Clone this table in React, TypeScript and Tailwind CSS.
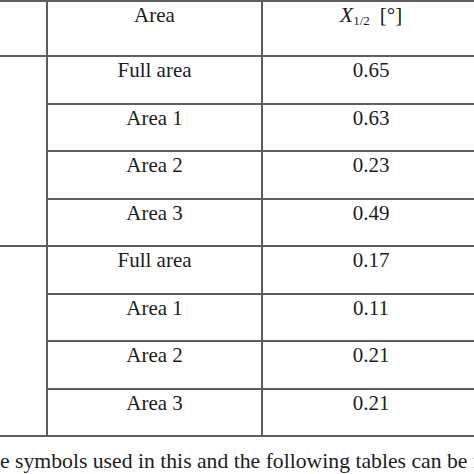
const groups = [
  [
    { area: "Full area", value: "0.65" },
    { area: "Area 1", value: "0.63" },
    { area: "Area 2", value: "0.23" },
    { area: "Area 3", value: "0.49" },
  ],
  [
    { area: "Full area", value: "0.17" },
    { area: "Area 1", value: "0.11" },
    { area: "Area 2", value: "0.21" },
    { area: "Area 3", value: "0.21" },
  ],
];

const App = () => {
  return (
    <div
      className="w-[474px] h-[474px] overflow-hidden bg-white text-[#1c1c1c]"
      style={{ fontFamily: '"Liberation Serif", "Times New Roman", serif' }}
    >
      {/* Table */}
      <div className="w-[480px] border-t-2 border-[#5e5e5e]">
        {/* Header */}
        <div className="flex h-[55px] border-b-2 border-[#5e5e5e]">
          <div className="w-[48px] border-r-2 border-[#5e5e5e]" />
          <div className="w-[215px] border-r-2 border-[#5e5e5e] pt-[1px] text-center text-[21px] leading-[24px]">
            Area
          </div>
          <div className="w-[216px] pt-[1px] text-center text-[21px] leading-[24px]">
            <i className="text-[22px]">X</i>
            <sub className="text-[13px] not-italic">1/2</sub>
            <span className="ml-[10px]">[°]</span>
          </div>
        </div>

        {/* Groups */}
        {groups.map((rows, gi) => (
          <div key={gi} className="flex border-b-2 border-[#5e5e5e]">
            <div className="w-[48px] border-r-2 border-[#5e5e5e]" />
            <div className="flex flex-col">
              {rows.map((row, ri) => (
                <div
                  key={ri}
                  className={`flex ${
                    ri < rows.length - 1
                      ? "h-[47.5px] border-b-2 border-[#5e5e5e]"
                      : "h-[45.5px]"
                  }`}
                >
                  <div className="w-[215px] border-r-2 border-[#5e5e5e] pt-[1px] text-center text-[21px] leading-[24px]">
                    {row.area}
                  </div>
                  <div className="w-[216px] pt-[1px] text-center text-[21px] leading-[24px]">
                    {row.value}
                  </div>
                </div>
              ))}
            </div>
          </div>
        ))}
      </div>

      {/* Caption */}
      <p className="mt-[12px] whitespace-nowrap text-[21.7px] leading-[24px]">
        e symbols used in this and the following tables can be found
      </p>
    </div>
  );
};

export default App;
